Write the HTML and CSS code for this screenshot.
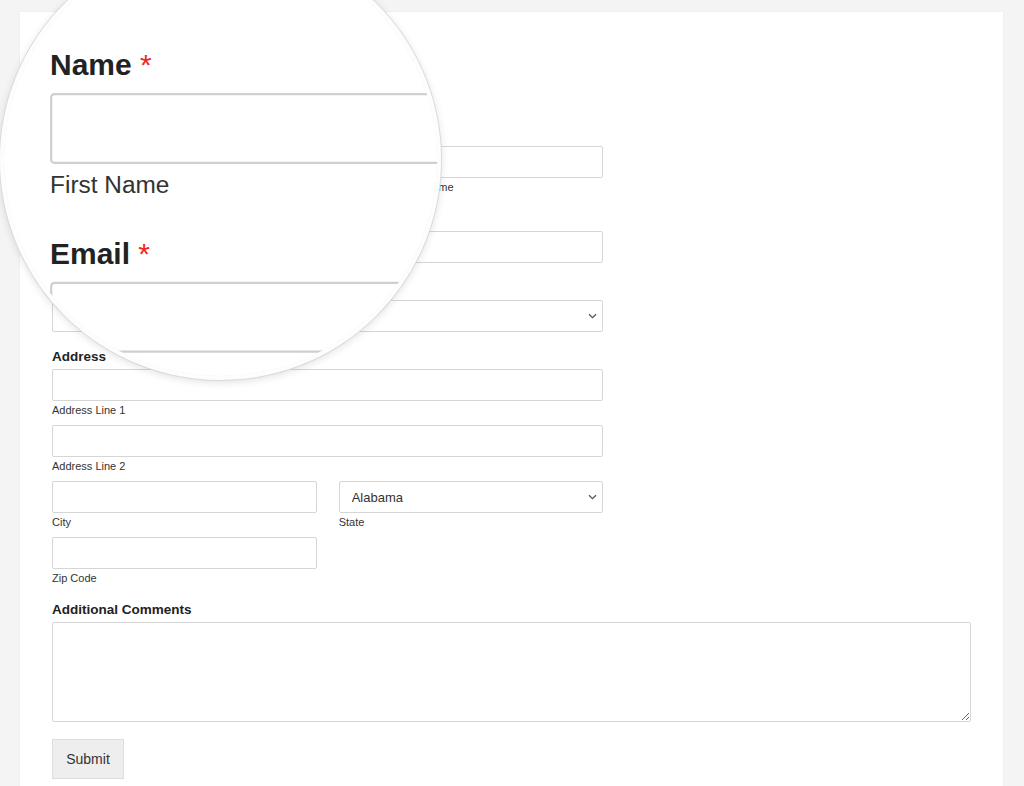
FILE: index.html
```html
<!DOCTYPE html>
<html lang="en">
<head>
<meta charset="utf-8">
<title>Form</title>
<link rel="stylesheet" href="styles.css">
</head>
<body>
<div class="page">
  <div class="card">
    <form class="form">
      <div class="field field-medium">
        <label class="label">Name <span class="req">*</span></label>
        <div class="row row-name">
          <div><input class="input" type="text"><span class="sublabel">First Name</span></div>
          <div><input class="input" type="text"><span class="sublabel">Middle Name</span></div>
          <div><input class="input" type="text"><span class="sublabel">Last Name</span></div>
        </div>
      </div>
      <div class="field field-medium">
        <label class="label">Email <span class="req">*</span></label>
        <input class="input" type="email">
      </div>
      <div class="field field-medium">
        <label class="label">Dropdown</label>
        <div class="select-wrap">
          <select class="input select"><option></option></select>
          <svg class="chev" width="9" height="6" viewBox="0 0 9 6"><path d="M1 1.2 L4.5 4.6 L8 1.2" fill="none" stroke="#555" stroke-width="1.3"/></svg>
        </div>
      </div>
      <div class="field field-medium">
        <label class="label">Address</label>
        <div class="stack">
          <div><input class="input" type="text"><span class="sublabel">Address Line 1</span></div>
          <div><input class="input" type="text"><span class="sublabel">Address Line 2</span></div>
          <div class="row row-half">
            <div><input class="input" type="text"><span class="sublabel">City</span></div>
            <div>
              <div class="select-wrap">
                <select class="input select"><option>Alabama</option></select>
                <svg class="chev" width="9" height="6" viewBox="0 0 9 6"><path d="M1 1.2 L4.5 4.6 L8 1.2" fill="none" stroke="#555" stroke-width="1.3"/></svg>
              </div>
              <span class="sublabel">State</span>
            </div>
          </div>
          <div class="row row-half">
            <div><input class="input" type="text"><span class="sublabel">Zip Code</span></div>
          </div>
        </div>
      </div>
      <div class="field">
        <label class="label">Additional Comments</label>
        <textarea class="input textarea"></textarea>
      </div>
      <div class="field">
        <button class="submit" type="button">Submit</button>
      </div>
    </form>
  </div>

  <div class="lens" aria-hidden="true">
    <div class="lens-view">
      <div class="card">
        <div class="form">
          <div class="field field-medium">
            <div class="label">Name <span class="req">*</span></div>
            <div class="row row-name">
              <div><div class="input"></div><span class="sublabel">First Name</span></div>
              <div><div class="input"></div><span class="sublabel">&nbsp;</span></div>
              <div><div class="input"></div><span class="sublabel">&nbsp;</span></div>
            </div>
          </div>
          <div class="field field-medium">
            <div class="label">Email <span class="req">*</span></div>
            <div class="input"></div>
          </div>
        </div>
      </div>
    </div>
  </div>
</div>
</body>
</html>
```
FILE: styles.css
```css
* { box-sizing: border-box; }
html, body { margin: 0; }
body {
  background: #f4f4f4;
  font-family: "Liberation Sans", Arial, sans-serif;
  color: #333;
  overflow: hidden;
}
.page {
  position: relative;
  padding: 12px 21px 0 20px;
  height: 786px;
}
.card {
  background: #fff;
  box-shadow: 0 0 2px rgba(0, 0, 0, 0.05);
  padding: 114px 32px 40px;
  min-height: 820px;
}
.form {
  display: flex;
  flex-direction: column;
  gap: 17px;
}
.field-medium { width: 60%; }
.label {
  display: block;
  font-weight: 700;
  font-size: 13.5px;
  line-height: 16px;
  color: #222;
  margin-bottom: 4px;
}
.req {
  color: #f0271c;
  font-weight: 400;
}
.input {
  display: block;
  width: 100%;
  height: 32px;
  margin: 0;
  border: 1px solid #d6d6d6;
  border-radius: 2px;
  background: #fff;
  font-family: inherit;
  font-size: 13px;
  color: #333;
  padding: 0 12px;
}
.sublabel {
  display: block;
  font-size: 11px;
  line-height: 13px;
  margin-top: 3px;
  color: #333;
}
.row { display: grid; column-gap: 22px; }
.row-name { grid-template-columns: 2fr 1fr 2fr; }
.row-half { grid-template-columns: 1fr 1fr; }
.stack {
  display: flex;
  flex-direction: column;
  gap: 8px;
}
.select-wrap { position: relative; }
.select {
  appearance: none;
  -webkit-appearance: none;
  padding-right: 28px;
}
.chev {
  position: absolute;
  right: 6px;
  top: 13px;
  pointer-events: none;
}
.textarea {
  height: 100px;
  resize: vertical;
  padding: 8px 12px;
}
.submit {
  display: block;
  height: 40px;
  width: 72px;
  padding: 0;
  background: #eee;
  border: 1px solid #ddd;
  border-radius: 0;
  font-family: inherit;
  font-size: 14px;
  color: #333;
}

/* magnifier */
.lens {
  position: absolute;
  left: 0;
  top: -61px;
  width: 441px;
  height: 441px;
  border-radius: 50%;
  overflow: hidden;
  background: #fff;
  border: 4px solid #fdfdfd;
  box-shadow: inset 0 0 0 1px #dcdcdc, 0 0 0 1px #dadada, 0 2px 9px rgba(0, 0, 0, 0.13);
}
.lens-view {
  position: absolute;
  left: -4px;
  top: 57px;
  width: 1024px;
  padding: 12px 21px 0 20px;
  transform-origin: 53.6px 189.4px;
  transform: scale(2.22);
}
.lens-view .card { box-shadow: none; min-height: 0; }
.lens-view .input { border-color: #cfcfcf; }
```
